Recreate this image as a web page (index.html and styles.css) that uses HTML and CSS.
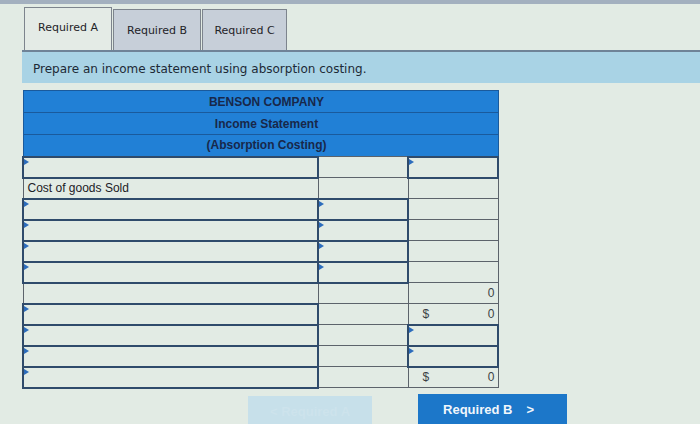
FILE: index.html
```html
<!DOCTYPE html>
<html>
<head>
<meta charset="utf-8">
<link rel="stylesheet" href="styles.css">
</head>
<body>
<div class="topstrip"></div>
<div class="tabs">
  <div class="tab active">Required A</div>
  <div class="tab">Required B</div>
  <div class="tab tab-c">Required C</div>
</div>
<div class="instruction">Prepare an income statement using absorption costing.</div>
<table class="stmt">
  <colgroup><col class="c1"><col class="c2"><col class="c3"></colgroup>
  <tr class="hd"><th colspan="3">BENSON COMPANY</th></tr>
  <tr class="hd"><th colspan="3">Income Statement</th></tr>
  <tr class="hd"><th colspan="3">(Absorption Costing)</th></tr>
  <tr><td class="in"></td><td></td><td class="in"></td></tr>
  <tr><td class="label">Cost of goods Sold</td><td></td><td></td></tr>
  <tr><td class="in"></td><td class="in"></td><td></td></tr>
  <tr><td class="in"></td><td class="in"></td><td></td></tr>
  <tr><td class="in"></td><td class="in"></td><td></td></tr>
  <tr><td class="in"></td><td class="in"></td><td></td></tr>
  <tr><td></td><td></td><td class="num"><span></span><span>0</span></td></tr>
  <tr><td class="in"></td><td></td><td class="num"><span>$</span><span>0</span></td></tr>
  <tr><td class="in"></td><td></td><td class="in"></td></tr>
  <tr><td class="in"></td><td></td><td class="in"></td></tr>
  <tr><td class="in"></td><td></td><td class="num"><span>$</span><span>0</span></td></tr>
</table>
<div class="nav">
  <div class="btn prev">&lt; Required A</div>
  <div class="btn next">Required B <span class="chev">&gt;</span></div>
</div>
</body>
</html>
```
FILE: styles.css
```css
html, body {
  margin: 0;
  padding: 0;
}
body {
  width: 700px;
  height: 424px;
  overflow: hidden;
  background: #e2ebe4;
  font-family: "Liberation Sans", Arial, sans-serif;
}
.topstrip {
  height: 4px;
  background: #a3b0bf;
}
.tabs {
  display: flex;
  align-items: flex-end;
  gap: 1px;
  margin-top: 3px;
  padding-left: 24px;
  height: 43px;
}
.tab {
  box-sizing: border-box;
  width: 88px;
  height: 41px;
  border: 1px solid #7d848d;
  border-bottom: none;
  background: #c7cfd9;
  font-family: "DejaVu Sans", Verdana, sans-serif;
  font-size: 11px;
  color: #1f2328;
  display: flex;
  align-items: center;
  justify-content: center;
}
.tab.active {
  height: 43px;
  background: #e4ebe6;
  padding-bottom: 4px;
}
.tab-c {
  width: 85px;
}
.instruction {
  box-sizing: border-box;
  margin-left: 22px;
  height: 33px;
  background: #a9d3e5;
  border-top: 2px solid #6f8397;
  font-family: "DejaVu Sans", Verdana, sans-serif;
  font-size: 12px;
  color: #1d2a36;
  padding: 10px 0 0 11px;
}
.stmt {
  margin: 7px 0 0 22px;
  border-collapse: collapse;
  table-layout: fixed;
  width: 475px;
}
.c1 { width: 295px; }
.c2 { width: 90px; }
.c3 { width: 90px; }
.stmt tr.hd {
  height: 22px;
}
.stmt th {
  padding: 0 0 0 12px;
  background: #2180d6;
  border-top: 1px solid #1a5a9c;
  border-left: 1px solid #1a5a9c;
  border-right: 1px solid #1a5a9c;
  color: #18284a;
  font-size: 12px;
  font-weight: bold;
  text-align: center;
}
.stmt tr {
  height: 21px;
}
.stmt td {
  padding: 0 3px;
  border: 1px solid #5c636b;
  font-size: 12px;
  color: #222;
  position: relative;
}
.stmt td.in {
  border: 2px solid #2f4b6b;
}
.stmt td.in::before {
  content: "";
  position: absolute;
  left: 0;
  top: 1px;
  border-top: 3px solid transparent;
  border-bottom: 3px solid transparent;
  border-left: 5px solid #2c6cbc;
}
.stmt td.label {
  padding-left: 4px;
  color: #1c2026;
}
.stmt td.num {
  color: #3a3f45;
}
.stmt td.num span:first-child {
  float: left;
  margin-left: 11px;
}
.stmt td.num span:last-child {
  float: right;
}
.nav {
  display: flex;
  margin-top: 5px;
  padding-left: 248px;
  gap: 46px;
}
.btn {
  box-sizing: border-box;
  height: 32px;
  display: flex;
  align-items: center;
  justify-content: center;
  font-size: 13px;
  font-weight: bold;
}
.prev {
  width: 124px;
  margin-top: 2px;
  background: #c7e0ea;
  color: #cde3ec;
}
.next {
  width: 149px;
  background: #1c77c9;
  color: #f1f6fb;
  padding-right: 8px;
}
.chev {
  margin-left: 14px;
}
```
